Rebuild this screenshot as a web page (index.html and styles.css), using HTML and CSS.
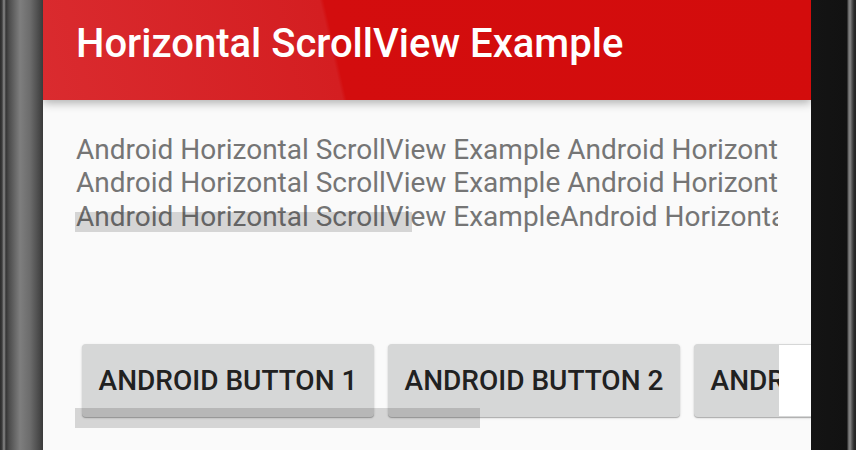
FILE: index.html
```html
<!DOCTYPE html>
<html lang="en">
<head>
    <meta charset="UTF-8">
    <meta name="viewport" content="width=device-width, initial-scale=1.0">
    <title>Horizontal ScrollView Example</title>
    <link rel="stylesheet" href="styles.css">
</head>
<body>
    <div class="phone">
        <div class="bezel-left"></div>
        <div class="screen">
            <div class="appbar">
                <h1>Horizontal ScrollView Example</h1>
            </div>
            <div class="text-scroll">
<div class="lines">Android Horizontal ScrollView Example Android Horizontal ScrollView Example
Android Horizontal ScrollView Example Android Horizontal ScrollView Example
Android Horizontal ScrollView ExampleAndroid Horizontal ScrollView Example</div>
                <div class="scrollbar text-bar"></div>
            </div>
            <div class="button-scroll">
                <div class="buttons">
                    <div class="btn">ANDROID BUTTON 1</div>
                    <div class="btn">ANDROID BUTTON 2</div>
                    <div class="btn">ANDROID BUTTON 3<span class="glare"></span></div>
                </div>
                <div class="scrollbar button-bar"></div>
            </div>
        </div>
        <div class="bezel-right"></div>
    </div>
</body>
</html>
```

FILE: styles.css
```css
body {
    margin: 0;
    padding: 0;
    background-color: #111;
    font-family: Roboto, "Noto Sans", sans-serif;
}
.phone {
    display: flex;
    width: 856px;
    height: 450px;
    overflow: hidden;
}
.bezel-left {
    width: 43px;
    flex-shrink: 0;
    background: linear-gradient(to right, #2a2a2a 0, #3c3c3c 2px, #8a8a8a 4px, #353535 6px, #4c4c4c 9px, #7e7e7e 20px, #6c6c6c 30px, #3a3a3a 43px);
}
.bezel-right {
    width: 45px;
    flex-shrink: 0;
    background: linear-gradient(to right, #141414 0, #121212 36px, #5a5a5a 37px, #8a8a8a 39px, #555 41px, #2c2c2c 43px, #222 45px);
}
.screen {
    width: 768px;
    flex-shrink: 0;
    background-color: #fafafa;
    display: flex;
    flex-direction: column;
    overflow: hidden;
}
.appbar {
    height: 100px;
    box-sizing: border-box;
    padding: 20px 0 0 33px;
    background: linear-gradient(77deg, #da2b2f 0, #d41e21 292px, #d30d0e 296px, #d30c0c 100%);
    box-shadow: 0 3px 9px rgba(0, 0, 0, 0.3);
    position: relative;
    z-index: 1;
}
.appbar h1 {
    margin: 0;
    color: #fff;
    font-size: 40px;
    font-weight: 500;
    line-height: 47px;
}
.text-scroll {
    position: relative;
    margin: 33px 33px 0 33px;
}
.lines {
    white-space: pre;
    overflow: hidden;
    color: #757575;
    font-size: 28px;
    line-height: 33.3px;
}
.scrollbar {
    position: absolute;
    bottom: 0;
    height: 20px;
    background-color: rgba(0, 0, 0, 0.145);
}
.text-bar {
    left: -1px;
    bottom: 1px;
    width: 337px;
}
.button-scroll {
    position: relative;
    margin: 104px 0 0 32px;
    padding: 7px 0 11px 7px;
    overflow: hidden;
}
.buttons {
    display: flex;
    gap: 14px;
}
.btn {
    position: relative;
    flex-shrink: 0;
    width: 292px;
    height: 73px;
    box-sizing: border-box;
    display: flex;
    align-items: center;
    justify-content: center;
    background-color: #d6d7d7;
    border-radius: 4px;
    box-shadow: 0 1px 1px rgba(0, 0, 0, 0.25), 0 1px 3px rgba(0, 0, 0, 0.12);
    color: #212121;
    font-size: 28px;
    font-weight: 500;
}
.glare {
    position: absolute;
    left: 85px;
    right: 0;
    top: 1px;
    bottom: 1px;
    background-color: #fff;
}
.button-bar {
    left: 0;
    width: 405px;
}
```
